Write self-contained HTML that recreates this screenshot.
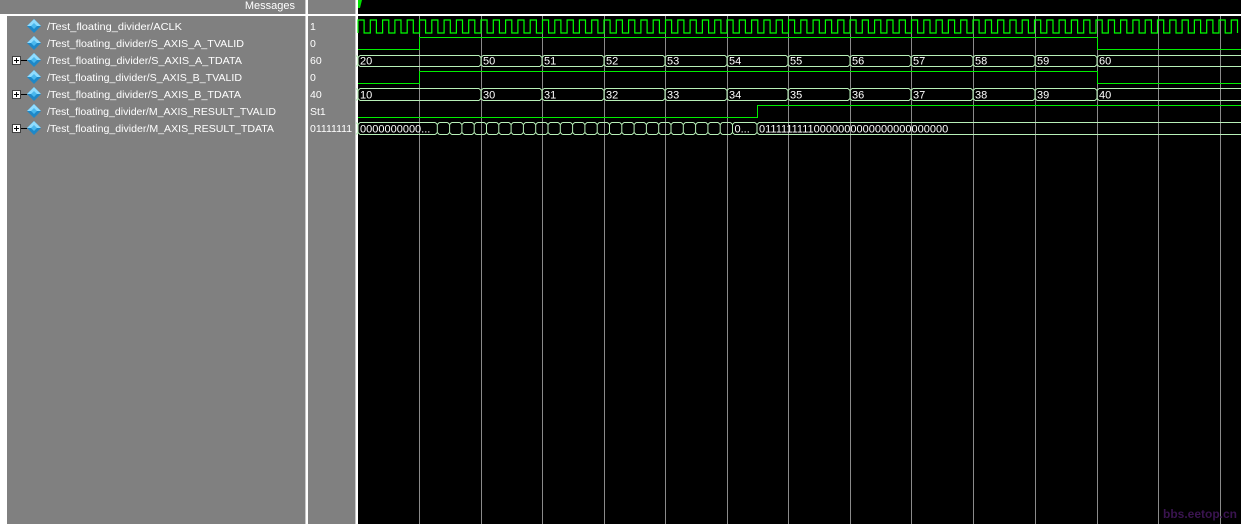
<!DOCTYPE html>
<html><head><meta charset="utf-8"><style>
html,body{margin:0;padding:0;width:1241px;height:524px;overflow:hidden;background:#000;}
svg{display:block;font-family:"Liberation Sans","DejaVu Sans",sans-serif;}
</style></head><body>
<svg id="s" width="1241" height="524" xmlns="http://www.w3.org/2000/svg">
<defs><clipPath id="vc"><rect x="308" y="0" width="47" height="524"/></clipPath></defs>
<rect x="0" y="0" width="1241" height="524" fill="#000"/>
<rect x="0" y="0" width="305" height="524" fill="#808080"/>
<rect x="0" y="16" width="7" height="508" fill="#fff"/>
<rect x="305" y="0" width="1" height="524" fill="#c8c8c8"/>
<rect x="306" y="0" width="2" height="524" fill="#fff"/>
<rect x="308" y="0" width="47" height="524" fill="#808080"/>
<rect x="355" y="0" width="1" height="524" fill="#c8c8c8"/>
<rect x="356" y="0" width="2" height="524" fill="#fff"/>
<rect x="0" y="14" width="306" height="2" fill="#fff"/>
<rect x="308" y="14" width="48" height="2" fill="#fff"/>
<rect x="358" y="14" width="883" height="2" fill="#fff"/>
<text x="295" y="9" font-size="11" fill="#fff" text-anchor="end">Messages</text>
<path d="M358 0 L358 8 L360 8 L362 0" fill="#00e000"/>
<g id="names" font-size="10.5" fill="#fff"></g>
<g id="wave"></g>
<text x="1163" y="518" font-size="12" font-weight="bold" fill="#3a1450">bbs.eetop.cn</text>
</svg>
<script>
var names=["ACLK","S_AXIS_A_TVALID","S_AXIS_A_TDATA","S_AXIS_B_TVALID","S_AXIS_B_TDATA","M_AXIS_RESULT_TVALID","M_AXIS_RESULT_TDATA"];
var widths=[135,197,195,195,194,229,227];
var vals=["1","0","60","0","40","St1","01111111"];
var plus=[0,0,1,0,1,0,1];
var h="";
for(var i=0;i<7;i++){var cy=26+i*17;
 h+='<text x="47" y="'+(cy+4)+'" textLength="'+widths[i]+'" lengthAdjust="spacingAndGlyphs">/Test_floating_divider/'+names[i]+'</text>';
 h+='<text x="310" y="'+(cy+4)+'" clip-path="url(#vc)">'+vals[i]+'</text>';
 h+='<path d="M34 '+(cy-7)+' L41 '+cy+' L34 '+(cy+7)+' L27 '+cy+'Z" fill="#1e88c8"/>';
 h+='<path d="M34 '+(cy-7)+' L41 '+cy+' L34 '+cy+' L27 '+cy+'Z" fill="#8fdcff"/>';
 h+='<path d="M34 '+(cy-3)+' L37 '+cy+' L34 '+(cy+3)+' L31 '+cy+'Z" fill="#4ab8ee"/>';
 if(plus[i]){h+='<rect x="12.5" y="'+(cy-3.5)+'" width="8" height="8" fill="#fff" stroke="#404040"/><path d="M14 '+(cy+0.5)+'h5M16.5 '+(cy-2)+'v5" stroke="#000"/><path d="M21 '+(cy+0.5)+'h6" stroke="#000"/>';}
}
document.getElementById("names").innerHTML=h;
var w="";
var grid=[419,481,542,604,665,727,788,850,911,973,1035,1097,1158,1220];
grid.forEach(function(x){w+='<rect x="'+x+'" y="16" width="1" height="508" fill="#8a8a8a"/>';});
var p="M358 33";var per=61.5/5;
for(var k=0;k<72;k++){var x=358+k*per;if(x>1241)break;p+=" L"+x.toFixed(1)+" 33 L"+x.toFixed(1)+" 20 L"+(x+per/2).toFixed(1)+" 20 L"+(x+per/2).toFixed(1)+" 33";}
w+='<path d="'+p+'" fill="none" stroke="#00ff00" stroke-width="1.2"/>';
var g="#00ee00";
w+='<path d="M358 49.5H419.5V37.5H1097.5V49.5H1241" fill="none" stroke="'+g+'"/>';
w+='<path d="M358 83.5H419.5V71.5H1097.5V83.5H1241" fill="none" stroke="'+g+'"/>';
w+='<path d="M358 117.5H757.5V105.5H1241" fill="none" stroke="'+g+'"/>';
function bus(yt,yb,tr,labels){var s="";var lc="#b8f0b8";
 for(var i=0;i<tr.length;i++){var x0=tr[i],x1=(i+1<tr.length?tr[i+1]:1245);
  s+='<path d="M'+(x0+2)+' '+yt+'H'+(x1-2)+'M'+(x0+2)+' '+yb+'H'+(x1-2)+'" stroke="'+lc+'" fill="none"/>';
  s+='<path d="M'+(x0-2)+' '+yt+'L'+x0+' '+(yt+2)+'V'+(yb-2)+'L'+(x0-2)+' '+yb+'M'+(x0+2)+' '+yt+'L'+x0+' '+(yt+2)+'M'+x0+' '+(yb-2)+'L'+(x0+2)+' '+yb+'" stroke="'+lc+'" fill="none"/>';
  if(labels[i]) s+='<text x="'+(x0+2)+'" y="'+(yb-2)+'" font-size="11" fill="#fff">'+labels[i]+'</text>';}
 return s;}
var t1=[358,481,542,604,665,727,788,850,911,973,1035,1097];
w+=bus(55.5,66.5,t1,["20","50","51","52","53","54","55","56","57","58","59","60"]);
w+=bus(88.5,100.5,t1,["10","30","31","32","33","34","35","36","37","38","39","40"]);
var t3=[358];var l3=["0000000000..."];
for(var k=0;k<=24;k++){t3.push(437.3+k*per);l3.push("");}
l3[l3.length-1]="0...";t3.push(757);l3.push("01111111110000000000000000000000");
w+=bus(122.5,134.5,t3,l3);
document.getElementById("wave").innerHTML=w;
</script>
</body></html>
